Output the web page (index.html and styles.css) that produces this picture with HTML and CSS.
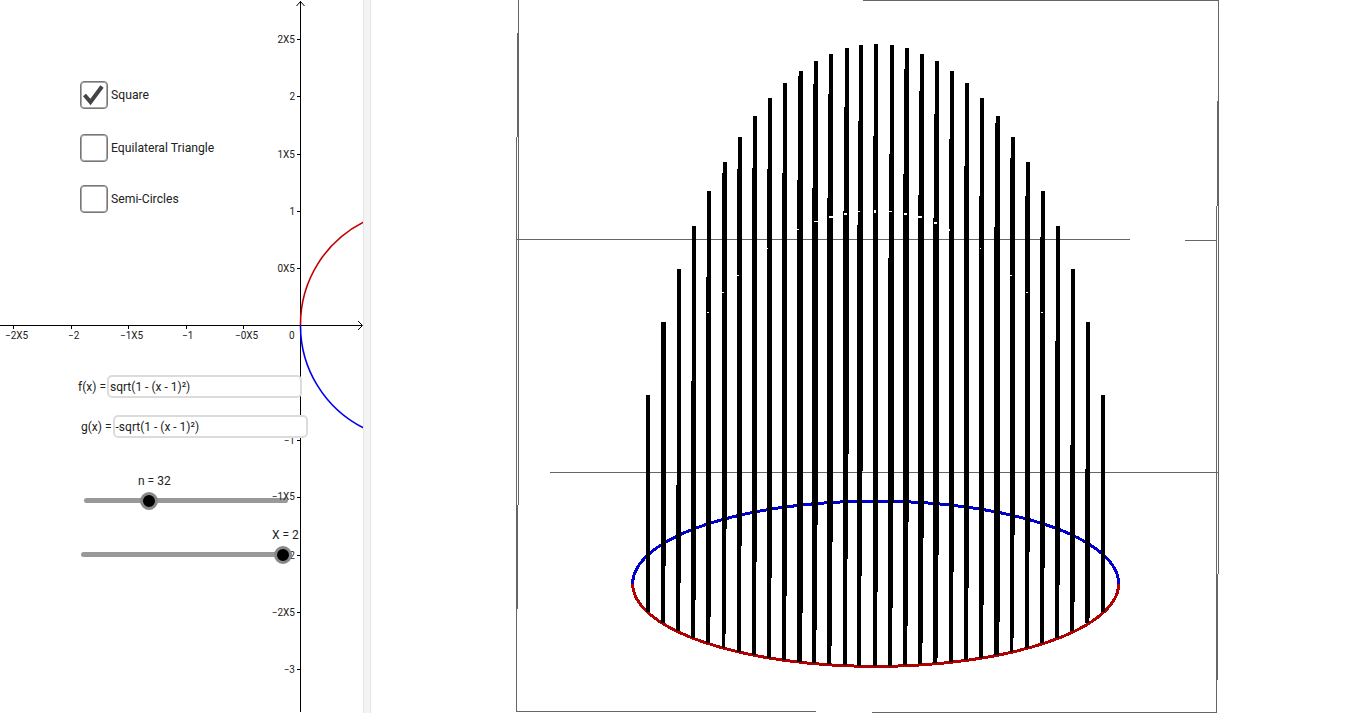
FILE: index.html
```html
<!DOCTYPE html>
<html lang="en">
<head>
<meta charset="utf-8">
<title>Solids with known cross-sections</title>
<link rel="stylesheet" href="styles.css">
</head>
<body>
<main class="app">
  <section class="graph-pane">
    <svg class="plot" viewBox="0 0 363 713" aria-label="Graph view">
      <path class="axis" d="M0 325.500H362M300.500 712V1"/>
      <path class="arrow" d="M358 321l4.500 4.500-4.500 4.500M296.500 6l4-4.500 4 4.500"/>
      <path class="tick" d="M13.500 326v3M71.500 326v3M128.500 326v3M186.500 326v3M243.500 326v3M297 39.500h3M297 96.500h3M297 154.500h3M297 211.500h3M297 268.500h3M297 383.500h3M297 440.500h3M297 497.500h3M297 555.500h3M297 612.500h3M297 669.500h3"/>
      <g class="ticks-x">
        <text x="5" y="339">−2X5</text>
        <text x="68" y="339">−2</text>
        <text x="120" y="339">−1X5</text>
        <text x="182" y="339">−1</text>
        <text x="235" y="339">−0X5</text>
        <text x="289" y="339">0</text>
      </g>
      <g class="ticks-y">
        <text x="295" y="43">2X5</text>
        <text x="295" y="100">2</text>
        <text x="295" y="158">1X5</text>
        <text x="295" y="215">1</text>
        <text x="295" y="272">0X5</text>
        <text x="295" y="444">−1</text>
        <text x="295" y="559">−2</text>
        <text x="295" y="616">−2X5</text>
        <text x="295" y="673">−3</text>
      </g>
      <path class="curve-red" d="M300.500 325A114.600 114.600 0 0 1 364 221.800"/>
      <path class="curve-blue" d="M300.500 325A114.600 114.600 0 0 0 364 428.200"/>
    </svg>

    <label class="check check-square"><span class="box"><svg class="tick-mark" viewBox="0 0 24 24"><path d="M2.500 12l6 7L20 3.500"/></svg></span>Square</label>
    <label class="check check-triangle"><span class="box"></span>Equilateral Triangle</label>
    <label class="check check-circle"><span class="box"></span>Semi-Circles</label>

    <div class="formula formula-f"><span>f(x) =</span><div class="field">sqrt(1 - (x - 1)²)</div></div>
    <div class="formula formula-g"><span>g(x) =</span><div class="field">-sqrt(1 - (x - 1)²)</div></div>

    <div class="slider slider-n"><span class="slider-label">n = 32</span><span class="knob"></span></div>
    <div class="slider slider-x"><span class="slider-label">X = 2</span><span class="knob"></span></div>
    <span class="axis-over">−1X5</span>
  </section>

  <div class="splitter"></div>

  <section class="view-pane">
    <svg class="scene" viewBox="371 0 995 713" aria-label="3D view">
      <path class="frame" d="M863 .5H1218.500V101M518.500 0V33M516 711.500H816M872 712.500H1217M516.500 137V505M518.500 137V505M516.500 609V712M1216.500 206V574M1218.500 206V574M1216.500 680V712M517 239.500H1130M1185 240.500H1217M550 472.500H1218"/>
      <path class="frame-thick" d="M518 33V137M517 505V609M1218 101V206M1217 574V680"/>

      <path class="rim-blue" d="M632.700 583.700A243 82.700 0 0 1 1118.700 583.700"/>
      <path class="rim-red" d="M632.700 583.700A243 82.700 0 0 0 1118.700 583.700"/>

      <g class="bars">
        <path d="M646 395h4V612h-4z"/>
        <path d="M661 322h5V566h-1V623h-4z"/>
        <path d="M677 269h4V583h-1V631H676V485h1z"/>
        <path d="M692 226h4V600h-1V638H691V381h1z"/>
        <path d="M707 191h4V617h-1V643H706V277h1z"/>
        <path d="M723 162h4V529h-1V634h-1V648H722V173h1z"/>
        <path d="M738 137h4V546h-1V652H737V169h1z"/>
        <path d="M753 116h4V562h-1V655H752V168h1z"/>
        <path d="M768 98h4V578h-1V658H767V169h1z"/>
        <path d="M783 83h4V596h-1V660H782V173h1z"/>
        <path d="M799 71h4V613h-1V662H797V180h1V76h1z"/>
        <path d="M814 61h4V525h-1V630h-1V663H812V188h1V84h1z"/>
        <path d="M829 54h4V542h-1V646h-1V664H827V198h1V94h1z"/>
        <path d="M845 48h4V454h-1V559h-1V665H843V211h1V107h1z"/>
        <path d="M859 45h4V471h-1V576h-1V666H857V225h1V121h1z"/>
        <path d="M874 44h4V592h-1V666H873V136h1z"/>
        <path d="M890 45h4V503h-1V608h-1V666H888V258h1V154h1z"/>
        <path d="M905 48h4V522h-1V626h-1V665H903V174h1V69h1z"/>
        <path d="M920 54h4V538h-1V643h-1V664H918V195h1V91h1z"/>
        <path d="M935 61h4V555h-1V658h-1V663H933V218h1V114h1z"/>
        <path d="M950 71h4V572h-1V662H949V139h1z"/>
        <path d="M965 83h4V588h-1V660H964V166h1z"/>
        <path d="M980 98h4V605h-1V658H979V196h1z"/>
        <path d="M996 116h4V622h-1V655H994V227h1V123h1z"/>
        <path d="M1011 137h4V535h-1V638h-1V652H1010V158h1z"/>
        <path d="M1026 162h4V552h-1V648H1025V196h1z"/>
        <path d="M1041 191h4V568h-1V643H1040V237h1z"/>
        <path d="M1056 226h4V585h-1V638H1055V341h1z"/>
        <path d="M1071 269h4V602h-1V631H1070V445h1z"/>
        <path d="M1086 322h4V618h-1V623h-4z"/>
        <path d="M1101 395h4V612h-4z"/>
      </g>

      <path class="specks" d="M707 312h2v1h-2zM722 292h2v1h-2zM737 275h2v1h-2zM767 248h1v1h-1zM797 229h2v1h-2zM814 221h4v1h-4zM829 216h4v2h-4zM844 213h3v2h-3zM858 211h2v1h-2zM874 210h2v3h-2zM889 211h3v1h-3zM904 213h3v2h-3zM918 216h4v2h-4zM934 222h3v2h-3zM949 229h1v2h-1zM980 248h1v1h-1zM1010 275h2v1h-2zM1026 292h2v1h-2zM1041 312h2v1h-2z"/>
    </svg>
  </section>
</main>
</body>
</html>
```
FILE: styles.css
```css
* {
  box-sizing: border-box;
}

html,
body {
  margin: 0;
  height: 715px;
  overflow: hidden;
  background: #fff;
  font-family: Roboto, "Liberation Sans", sans-serif;
  font-size: 12px;
  color: #222;
}

.app {
  display: flex;
  height: 713px;
}

.graph-pane {
  position: relative;
  flex: 0 0 363px;
  overflow: hidden;
}

.splitter {
  flex: 0 0 8px;
  background: #f4f4f4;
  border-left: 1px solid #e4e4e4;
  border-right: 1px solid #e4e4e4;
}

.view-pane {
  flex: 1;
  min-width: 0;
}

.plot,
.scene {
  display: block;
  width: 100%;
  height: 100%;
}

.axis,
.arrow,
.tick {
  fill: none;
  stroke: #000;
  stroke-width: 1;
}

.axis {
  shape-rendering: crispEdges;
}

.tick {
  shape-rendering: crispEdges;
}

.ticks-x text,
.ticks-y text {
  font-family: Roboto, sans-serif;
  font-size: 10px;
  fill: #222;
}

.ticks-y text {
  text-anchor: end;
}

.axis-over {
  position: absolute;
  right: 68px;
  top: 491px;
  font-size: 10px;
  line-height: 12px;
}

.curve-red,
.curve-blue {
  fill: none;
  stroke-width: 1.6;
}

.curve-red {
  stroke: #c00000;
}

.curve-blue {
  stroke: #0000f0;
}

.check {
  position: absolute;
  left: 80px;
  display: flex;
  align-items: center;
  gap: 3px;
  height: 28px;
  font-size: 12.2px;
  line-height: 16px;
}

.check-square {
  top: 81px;
}

.check-triangle {
  top: 134px;
}

.check-circle {
  top: 185px;
}

.box {
  flex: 0 0 28px;
  width: 28px;
  height: 28px;
  padding: 1px;
  border: 1px solid #777;
  border-radius: 4px;
  background: #fff;
  box-shadow: inset 0 0 0 1px #aaa;
}

.tick-mark {
  display: block;
  width: 24px;
  height: 24px;
  overflow: visible;
}

.tick-mark path {
  fill: none;
  stroke: #444;
  stroke-width: 4;
}

.formula {
  position: absolute;
  display: flex;
  align-items: center;
  gap: 1px;
}

.formula-f {
  left: 78px;
  top: 375px;
  width: 224px;
}

.formula-g {
  left: 81px;
  top: 415px;
  width: 227px;
}

.field {
  flex: 1;
  height: 23px;
  padding: 0 1px;
  line-height: 20px;
  background: #fff;
  border: 2px solid #dcdcdc;
  border-radius: 5px;
}

.slider {
  position: absolute;
  height: 5px;
  background: #999;
  border-radius: 2.5px;
}

.slider-n {
  left: 84px;
  top: 498px;
  width: 204px;
}

.slider-x {
  left: 81px;
  top: 552px;
  width: 202px;
}

.slider-label {
  position: absolute;
  top: -25px;
  line-height: 16px;
  white-space: nowrap;
}

.slider-n .slider-label {
  left: 54px;
}

.slider-x .slider-label {
  left: 191px;
}

.knob {
  position: absolute;
  top: -6.5px;
  width: 18px;
  height: 18px;
  background: #000;
  border: 3px solid #888;
  border-radius: 50%;
}

.slider-n .knob {
  left: 56px;
}

.slider-x .knob {
  left: 193px;
}

.frame {
  fill: none;
  stroke: #666;
  stroke-width: 1;
  shape-rendering: crispEdges;
}

.frame-thick {
  fill: none;
  stroke: #666;
  stroke-width: 2;
  shape-rendering: crispEdges;
}

.rim-blue,
.rim-red {
  fill: none;
  stroke-width: 3;
  shape-rendering: crispEdges;
}

.rim-blue {
  stroke: #0000cc;
}

.rim-red {
  stroke: #b00000;
}

.bars path {
  fill: #000;
  shape-rendering: crispEdges;
}

.specks {
  fill: #fff;
  shape-rendering: crispEdges;
}
```
